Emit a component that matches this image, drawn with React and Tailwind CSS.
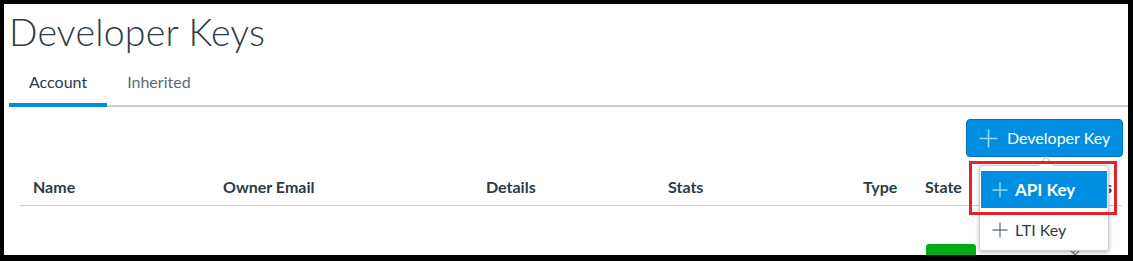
import React from 'react';

function Plus({ className }) {
  return (
    <svg viewBox="0 0 18 18" className={className} fill="none" stroke="currentColor" strokeWidth="1.6">
      <path d="M9 0.5v17M0.5 9h17" />
    </svg>
  );
}

export default function App() {
  const headers = [
    { label: 'Name', w: 'w-[190px]' },
    { label: 'Owner Email', w: 'w-[263px]' },
    { label: 'Details', w: 'w-[182px]' },
    { label: 'Stats', w: 'w-[195px]' },
    { label: 'Type', w: 'w-[62px]' },
    { label: 'State', w: 'w-[60px]' },
  ];

  return (
    <div className="w-[1133px] h-[261px] bg-black pt-[4px] pl-[4px] pr-[5px] pb-[6px]" style={{ fontFamily: 'Lato, "Liberation Sans", sans-serif' }}>
      <div className="relative w-full h-full bg-white overflow-hidden text-[#2d3b45]">
        {/* Title */}
        <h1 className="pl-[5px] h-[52px] pt-[4px] text-[37.5px] leading-[48px] font-light tracking-[0.2px] text-[#2d3b45]">
          Developer Keys
        </h1>

        {/* Tabs */}
        <div className="mt-[4px] ml-[5px] flex border-b-2 border-[#c7cdd1]">
          <div className="px-[20px] pt-[12px] pb-[11px] text-[16px] leading-[20px] text-[#2d3b45] border-b-4 border-[#008ee2] -mb-[2px]">
            Account
          </div>
          <div className="px-[20px] pt-[12px] pb-[11px] text-[16px] leading-[20px] text-[#5a6a75]">
            Inherited
          </div>
        </div>

        {/* Button row */}
        <div className="flex justify-end pr-[5px] mt-[12px]">
          <button className="h-[38px] w-[157px] flex items-center gap-[9px] pl-[12px] rounded-[4px] bg-[#008ee2] border border-[#0374b5] text-white text-[16px]">
            <Plus className="w-[19px] h-[19px] text-[#9ad3f6]" />
            <span>Developer Key</span>
          </button>
        </div>

        {/* Table header */}
        <div className="ml-[16px] mr-[6px] h-[49px] border-b border-[#c7cdd1] flex items-end pl-[13px] pb-[8px] text-[16px] leading-[20px] font-bold">
          {headers.map((h) => (
            <div key={h.label} className={`${h.w} shrink-0`}>{h.label}</div>
          ))}
          <div className="ml-auto pr-[10px]">Actions</div>
        </div>

        {/* First row (cut off) */}
        <div className="flex mt-[38px]">
          <div className="ml-[922px] w-[50px] h-[20px] bg-[#00ac18] rounded-t-[3px]" />
        </div>
        <svg viewBox="0 0 12 8" className="absolute left-[1064px] top-[244px] w-[12px] h-[8px] text-[#73818c]" fill="none" stroke="currentColor" strokeWidth="1.2">
          <path d="M1 1l4 4 4-4M3 3l4 4 4-4" />
        </svg>

        {/* Dropdown menu */}
        <div className="absolute left-[975px] top-[161px] w-[130px] h-[86px] bg-white border border-[#c7cdd1] rounded-[3px] shadow-[0_2px_4px_rgba(0,0,0,0.25)] pt-[5px]">
          <div className="absolute -top-[7px] left-[60px] w-[12px] h-[12px] bg-white border-l border-t border-[#c7cdd1] rotate-45" />
          <div className="relative mx-[1px] h-[37px] bg-[#008ee2] flex items-center gap-[7px] pl-[11px] text-white text-[17px] font-bold">
            <Plus className="w-[16px] h-[16px] text-[#9ad3f6]" />
            <span>API Key</span>
          </div>
          <div className="h-[40px] flex items-center gap-[7px] pl-[12px] pt-[4px] text-[16px] text-[#2d3b45]">
            <Plus className="w-[16px] h-[16px] text-[#73818c]" />
            <span>LTI Key</span>
          </div>
        </div>

        {/* Red highlight box */}
        <div className="absolute left-[965px] top-[157px] w-[148px] h-[54px] border-[3px] border-[#e8202a]" />
      </div>
    </div>
  );
}
